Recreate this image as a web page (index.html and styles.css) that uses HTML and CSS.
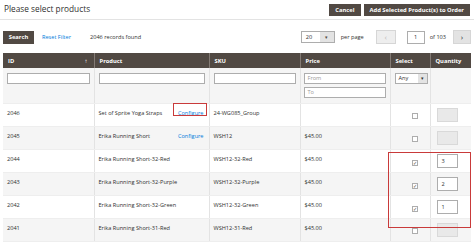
FILE: index.html
```html
<!DOCTYPE html>
<html lang="en">
<head>
  <meta charset="UTF-8">
  <title>Please select products</title>
<link rel="stylesheet" href="styles.css">
</head>
<body>
<header class="page-head">
  <h1>Please select products</h1>
  <div class="actions">
    <button class="btn">Cancel</button>
    <button class="btn">Add Selected Product(s) to Order</button>
  </div>
</header>

<div class="toolbar">
  <button class="btn btn-search">Search</button>
  <a class="reset" href="#">Reset Filter</a>
  <span class="found">2046 records found</span>
  <div class="pager">
    <div class="limit"><span class="limit-val">20</span><span class="limit-arrow">&#9662;</span></div>
    <span class="per-page">per page</span>
    <button class="page-btn prev">&lsaquo;</button>
    <span class="page-input">1</span>
    <span class="of">of 103</span>
    <button class="page-btn next">&rsaquo;</button>
  </div>
</div>

<table class="grid">
  <colgroup>
    <col style="width:91px"><col style="width:115px"><col style="width:91px">
    <col style="width:90px"><col style="width:40px"><col style="width:41px">
  </colgroup>
  <thead>
    <tr class="heads">
      <th>ID <span class="sort">&#8593;</span></th>
      <th>Product</th>
      <th>SKU</th>
      <th>Price</th>
      <th>Select</th>
      <th>Quantity</th>
    </tr>
    <tr class="filters">
      <td><span class="field"></span></td>
      <td><span class="field"></span></td>
      <td><span class="field"></span></td>
      <td class="range"><span class="field ph">From</span><span class="field ph">To</span></td>
      <td><div class="any"><span>Any</span><span class="any-arrow">&#9662;</span></div></td>
      <td></td>
    </tr>
  </thead>
  <tbody>
    <tr>
      <td>2046</td>
      <td><div class="prod"><span>Set of Sprite Yoga Straps</span><a href="#">Configure</a></div></td>
      <td>24-WG085_Group</td>
      <td></td>
      <td class="sel"><span class="check"></span></td>
      <td class="qty"><span class="qty-box off"></span></td>
    </tr>
    <tr>
      <td>2045</td>
      <td><div class="prod"><span>Erika Running Short</span><a href="#">Configure</a></div></td>
      <td>WSH12</td>
      <td>$45.00</td>
      <td class="sel"><span class="check"></span></td>
      <td class="qty"><span class="qty-box off"></span></td>
    </tr>
    <tr>
      <td>2044</td>
      <td>Erika Running Short-32-Red</td>
      <td>WSH12-32-Red</td>
      <td>$45.00</td>
      <td class="sel"><span class="check on">&#10003;</span></td>
      <td class="qty"><span class="qty-box">3</span></td>
    </tr>
    <tr>
      <td>2043</td>
      <td>Erika Running Short-32-Purple</td>
      <td>WSH12-32-Purple</td>
      <td>$45.00</td>
      <td class="sel"><span class="check on">&#10003;</span></td>
      <td class="qty"><span class="qty-box">2</span></td>
    </tr>
    <tr>
      <td>2042</td>
      <td>Erika Running Short-32-Green</td>
      <td>WSH12-32-Green</td>
      <td>$45.00</td>
      <td class="sel"><span class="check on">&#10003;</span></td>
      <td class="qty"><span class="qty-box">1</span></td>
    </tr>
    <tr>
      <td>2041</td>
      <td>Erika Running Short-31-Red</td>
      <td>WSH12-31-Red</td>
      <td>$45.00</td>
      <td class="sel"><span class="check"></span></td>
      <td class="qty"><span class="qty-box off"></span></td>
    </tr>
  </tbody>
</table>

<div class="mark mark-configure"></div>
<div class="mark mark-selected"></div>
</body>
</html>
```

FILE: styles.css
```css
*{box-sizing:border-box;}
body{margin:0;font-family:"Open Sans",sans-serif;font-size:5.6px;color:#303030;background:#fff;}
button{font-family:inherit;cursor:pointer;}
a{color:#007bdb;text-decoration:none;}

.page-head{display:flex;justify-content:space-between;align-items:flex-start;height:20px;padding:4px 4px 0 4px;border-bottom:1px solid #e3e3e3;}
.page-head h1{margin:0;font-size:8.3px;font-weight:400;line-height:9px;color:#303030;}
.actions{display:flex;gap:3px;}

.btn{display:flex;align-items:center;height:12px;padding:0 6px;border:0;background:#514943;color:#fff;font-weight:700;font-size:5.8px;}

.toolbar{display:flex;align-items:center;height:14px;margin:10px 3px 0 3px;}
.btn-search{height:13px;width:31px;justify-content:center;padding:0;}
.reset{margin-left:8px;font-size:5.6px;}
.found{margin-left:19px;}
.pager{display:flex;align-items:center;margin-left:auto;height:14px;}
.limit{display:flex;width:34px;height:12px;border:1px solid #adadad;}
.limit-val{flex:1;padding-left:4px;line-height:10px;}
.limit-arrow{width:14px;background:#e3e3e3;text-align:center;line-height:10px;font-size:5px;color:#514943;}
.per-page{margin-left:6px;}
.page-btn{width:20px;height:14px;margin-left:12px;padding:0;border:1px solid #d6d6d6;background:#e3e3e3;font-size:8px;line-height:10px;color:#303030;}
.page-btn.prev{color:#bbb;background:#eee;}
.page-input{width:18px;height:13px;margin-left:11px;border:1px solid #adadad;text-align:center;line-height:11px;}
.of{margin-left:5px;}
.page-btn.next{margin-left:7px;width:18px;}

.grid{margin:9px 3px 0 3px;width:468px;border-collapse:collapse;table-layout:fixed;}
.grid th{height:15px;padding:0 5px;background:#514943;color:#fff;font-weight:700;font-size:5.8px;text-align:left;border-left:1px solid #837a74;}
.grid th:first-child{border-left:0;}
.sort{float:right;font-weight:400;font-size:6px;margin-right:1px;}
.grid td{height:23px;padding:5px 4px 0 4px;vertical-align:top;border-left:1px solid #e3e3e3;border-bottom:1px solid #eee;}
.grid td:first-child{border-left:0;}
.grid .filters td{height:35px;padding:5px 4px 0 4px;background:#f5f5f5;}
.grid .filters td:first-child{padding-left:4px;}
.field{display:block;height:11px;border:1px solid #adadad;background:#fff;}
.range .field{margin-left:-1px;margin-bottom:3px;padding-left:3px;line-height:9px;color:#999;}
.any{display:flex;width:33px;height:11px;border:1px solid #adadad;background:#fff;}
.any span:first-child{flex:1;padding-left:3px;line-height:9px;}
.any-arrow{width:9px;background:#e3e3e3;text-align:center;line-height:9px;font-size:4.5px;}

.grid tbody tr:nth-child(even) td{background:#f5f5f5;}
.prod{display:flex;justify-content:space-between;padding-right:1px;}
.grid td.sel{padding:9px 12px 0 0;text-align:right;}
.check{display:inline-block;width:6px;height:6px;border:1px solid #adadad;background:#fff;font-size:5px;line-height:4px;text-align:center;color:#514943;}
.grid td.qty{padding:4px 0 0 6px;}
.qty-box{display:block;width:21px;height:14px;border:1px solid #adadad;background:#fff;padding-left:4px;line-height:12px;}
.qty-box.off{background:#e9e9e9;border-color:#d9d9d9;}

.mark{position:absolute;border:1px solid #c93a3a;}
.mark-configure{left:173px;top:103px;width:34px;height:13px;}
.mark-selected{left:388px;top:152px;width:83px;height:76px;}
```
